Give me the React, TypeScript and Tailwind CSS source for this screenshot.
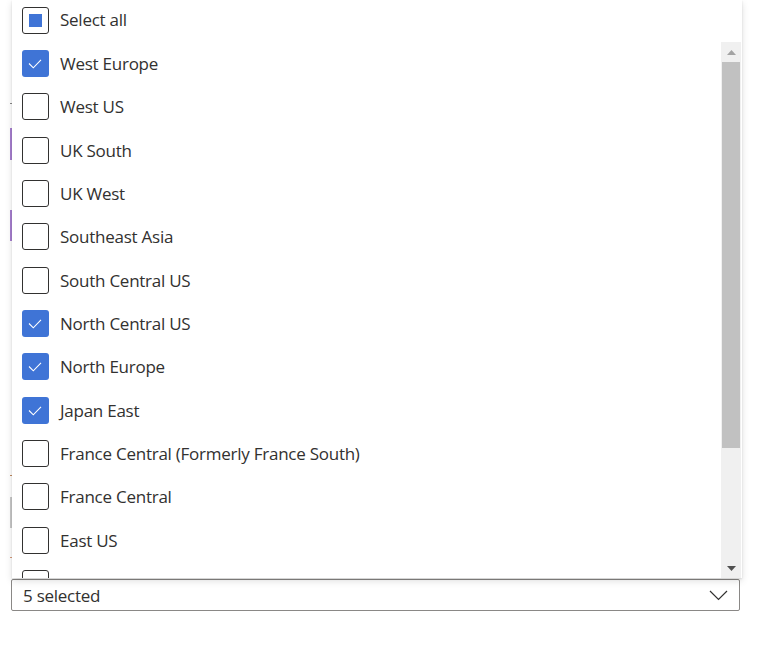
import React from 'react';

const regions: { name: string; checked: boolean }[] = [
  { name: 'West Europe', checked: true },
  { name: 'West US', checked: false },
  { name: 'UK South', checked: false },
  { name: 'UK West', checked: false },
  { name: 'Southeast Asia', checked: false },
  { name: 'South Central US', checked: false },
  { name: 'North Central US', checked: true },
  { name: 'North Europe', checked: true },
  { name: 'Japan East', checked: true },
  { name: 'France Central (Formerly France South)', checked: false },
  { name: 'France Central', checked: false },
  { name: 'East US', checked: false },
  { name: 'East Asia', checked: false },
];

function Box({ state }: { state: 'on' | 'off' | 'mixed' }) {
  if (state === 'on') {
    return (
      <span className="flex h-[27px] w-[27px] shrink-0 items-center justify-center rounded-[3px] bg-[#3f74d6]">
        <svg width="27" height="27" viewBox="0 0 27 27" fill="none">
          <path d="M7 13.5 L11.3 17.8 L19 9.8" stroke="white" strokeWidth="1.1" />
        </svg>
      </span>
    );
  }
  return (
    <span className="flex h-[27px] w-[27px] shrink-0 items-center justify-center rounded-[3px] border-[1.5px] border-[#323130] bg-white">
      {state === 'mixed' && <span className="h-[13px] w-[13px] bg-[#3f74d6]" />}
    </span>
  );
}

function Row({ label, state, h }: { label: string; state: 'on' | 'off' | 'mixed'; h: string }) {
  return (
    <div className={`flex shrink-0 items-center gap-[11px] pl-[10px] ${h}`}>
      <Box state={state} />
      <span className="whitespace-nowrap text-[17px] tracking-[-0.25px] text-[#323130]">{label}</span>
    </div>
  );
}

export default function App() {
  return (
    <div className="relative h-[646px] w-[767px] overflow-hidden bg-white font-['Open_Sans','Noto_Sans',sans-serif]">
      {/* page underneath the open dropdown */}
      <div className="flex flex-col">
        <div className="flex h-[579px] flex-col pl-[10px]">
          <span className="mt-[103px] h-[1px] w-[2px] bg-[#888]" />
          <span className="mt-[24px] h-[32px] w-[2px] bg-[#a77fcf]" />
          <span className="mt-[50px] h-[31px] w-[2px] bg-[#a77fcf]" />
          <span className="mt-[234px] h-[1px] w-[2px] bg-[#c08a60]" />
          <span className="mt-[21px] h-[31px] w-[2px] bg-[#c8c8c8]" />
          <span className="mt-[29px] h-[1px] w-[2px] bg-[#d49a7a]" />
        </div>
        <div className="ml-[11px] flex h-[32px] w-[729px] items-center justify-between rounded-[2px] border border-[#8a8886] pl-[11px] pr-[11px]">
          <span className="pt-[1px] text-[17px] tracking-[-0.25px] text-[#323130]">5 selected</span>
          <svg width="19" height="11" viewBox="0 0 19 11" fill="none">
            <path d="M1 1 L9.5 9.5 L18 1" stroke="#323130" strokeWidth="1.2" />
          </svg>
        </div>
      </div>

      {/* dropdown callout */}
      <div className="absolute left-[12px] top-0 flex h-[578px] w-[730px] flex-col bg-white shadow-[0_3px_7px_rgba(0,0,0,0.13),0_0.6px_1.8px_rgba(0,0,0,0.11)]">
        <div className="flex h-[42px] shrink-0 flex-col pb-[2px]">
          <Row label="Select all" state="mixed" h="h-[40px]" />
        </div>
        <div className="flex min-h-0 flex-1">
          <div className="flex flex-1 flex-col overflow-hidden">
            {regions.map((r) => (
              <Row key={r.name} label={r.name} state={r.checked ? 'on' : 'off'} h="h-[43.33px]" />
            ))}
          </div>
          <div className="mr-[1px] flex w-[20px] flex-col bg-[#f0f0f0]">
            <div className="flex h-[20px] items-center justify-center">
              <svg width="9" height="5" viewBox="0 0 9 5">
                <path d="M0 5 L4.5 0 L9 5 Z" fill="#a3a3a3" />
              </svg>
            </div>
            <div className="mx-[1px] h-[386px] bg-[#c1c1c1]" />
            <div className="flex-1" />
            <div className="flex h-[20px] items-center justify-center">
              <svg width="9" height="5" viewBox="0 0 9 5">
                <path d="M0 0 L9 0 L4.5 5 Z" fill="#505050" />
              </svg>
            </div>
          </div>
        </div>
      </div>
    </div>
  );
}
